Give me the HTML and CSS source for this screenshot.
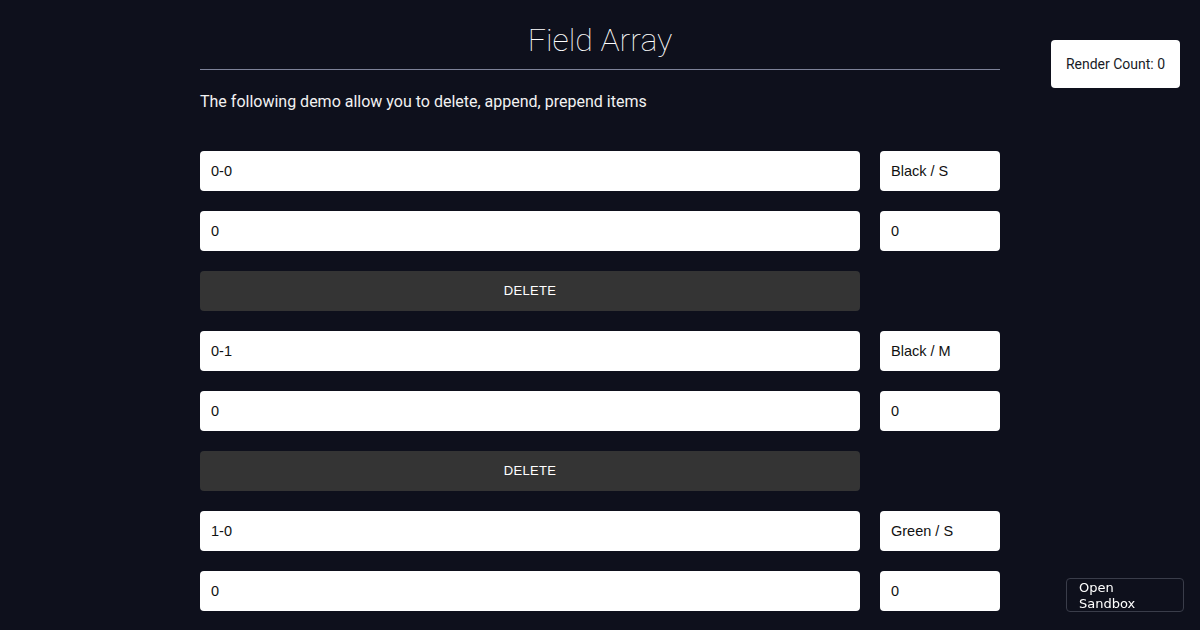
FILE: index.html
```html
<!DOCTYPE html>
<html>
<head>
<meta charset="utf-8">
<link rel="stylesheet" href="styles.css">
</head>
<body>
<div class="container">
  <header class="header"><h1 class="title">Field Array</h1></header>
  <p class="intro">The following demo allow you to delete, append, prepend items</p>
  <div class="fields">
    <input class="field wide" value="0-0">
    <input class="field narrow" value="Black / S">
    <input class="field wide" value="0">
    <input class="field narrow" value="0">
    <button class="delete">DELETE</button>
    <div></div>
    <input class="field wide" value="0-1">
    <input class="field narrow" value="Black / M">
    <input class="field wide" value="0">
    <input class="field narrow" value="0">
    <button class="delete">DELETE</button>
    <div></div>
    <input class="field wide" value="1-0">
    <input class="field narrow" value="Green / S">
    <input class="field wide" value="0">
    <input class="field narrow" value="0">
  </div>
</div>
<div class="counter">Render Count: 0</div>
<button class="sandbox">Open<br>Sandbox</button>
</body>
</html>
```
FILE: styles.css
```css
html, body {
  margin: 0;
  padding: 0;
  background: #0e101c;
  height: 100%;
  overflow: hidden;
}
body {
  font-family: Roboto, "Liberation Sans", sans-serif;
  color: #fff;
}
.container {
  width: 800px;
  margin: 0 auto;
}
.header {
  border-bottom: 1px solid #7d8299;
  padding: 21px 0 10px;
}
.title {
  margin: 0;
  font-weight: 100;
  font-size: 32px;
  line-height: 38px;
  text-align: center;
  color: #fff;
}
.intro {
  margin: 22px 0 40px;
  font-size: 16px;
  line-height: 19px;
  color: #f2f2f2;
}
.fields {
  display: grid;
  grid-template-columns: 660px 120px;
  column-gap: 20px;
  row-gap: 20px;
}
.field {
  box-sizing: border-box;
  height: 40px;
  width: 100%;
  border: none;
  border-radius: 4px;
  background: #fff;
  padding: 0 11px;
  font-family: "Liberation Sans", Arial, sans-serif;
  font-size: 14.5px;
  color: #111;
  outline: none;
  margin: 0;
}
.delete {
  height: 40px;
  border: none;
  border-radius: 4px;
  background: #343434;
  color: #fff;
  font-family: "Liberation Sans", Arial, sans-serif;
  font-size: 13px;
  letter-spacing: 0.3px;
  padding: 0 0 2px;
  margin: 0;
}
.counter {
  position: fixed;
  top: 40px;
  left: 1051px;
  width: 129px;
  height: 48px;
  box-sizing: border-box;
  background: #fff;
  border-radius: 4px;
  color: #191b26;
  font-size: 14px;
  line-height: 48px;
  text-align: center;
}
.sandbox {
  position: fixed;
  top: 578px;
  left: 1066px;
  width: 118px;
  height: 34px;
  box-sizing: border-box;
  background: #0e101c;
  border: 1px solid #3a3d4a;
  border-radius: 4px;
  color: #fff;
  font-family: "DejaVu Sans", sans-serif;
  font-size: 13px;
  line-height: 16px;
  text-align: left;
  padding: 1px 0 0 12px;
  margin: 0;
}
```
